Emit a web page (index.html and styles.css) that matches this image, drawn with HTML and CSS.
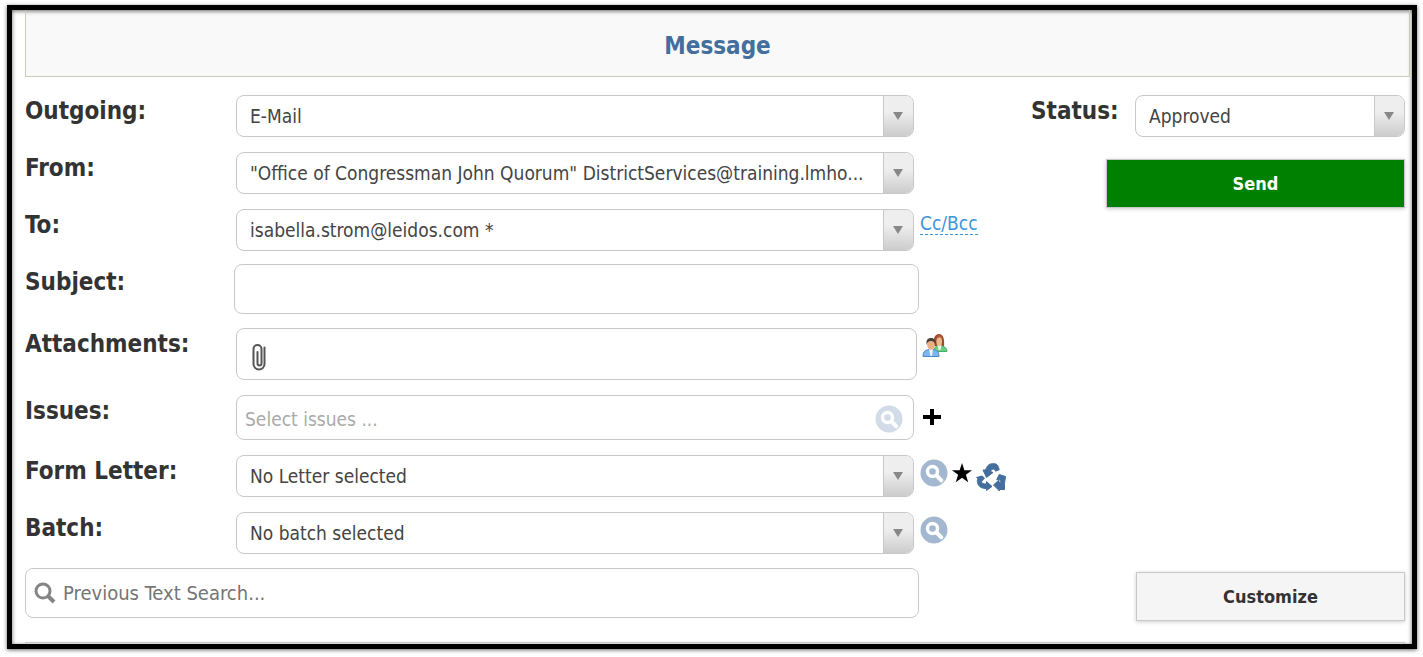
FILE: index.html
```
<!DOCTYPE html>
<html lang="en">
<head>
    <meta charset="UTF-8">
    <meta name="viewport" content="width=device-width, initial-scale=1.0">
    <title>Message</title>
    <link rel="stylesheet" href="styles.css">
</head>
<body>
    <!-- Shared icon shapes -->
    <svg class="sprite" aria-hidden="true">
        <symbol id="icon-find" viewBox="0 0 28 28">
            <circle cx="14" cy="14" r="13.5" fill="currentColor"/>
            <circle cx="12.5" cy="12.5" r="5" fill="none" stroke="#fff" stroke-width="3.4"/>
            <path d="M16.5 16.5l4.8 4.8" stroke="#fff" stroke-width="4" stroke-linecap="round"/>
        </symbol>
    </svg>

    <div class="frame">
        <h1 class="title">Message</h1>

        <form class="message-form">
            <div class="fields">
                <div class="row">
                    <label for="outgoing">Outgoing:</label>
                    <div class="select-box">
                        <select id="outgoing"><option>E-Mail</option></select>
                    </div>
                </div>
                <div class="row">
                    <label for="from">From:</label>
                    <div class="select-box">
                        <select id="from"><option>"Office of Congressman John Quorum" DistrictServices@training.lmho...</option></select>
                    </div>
                </div>
                <div class="row">
                    <label for="to">To:</label>
                    <div class="select-box">
                        <select id="to"><option>isabella.strom@leidos.com *</option></select>
                    </div>
                    <div class="side"><a href="#" class="cc-link">Cc/Bcc</a></div>
                </div>
                <div class="row row-subject">
                    <label for="subject">Subject:</label>
                    <input type="text" id="subject" class="subject">
                </div>
                <div class="row">
                    <label for="attach">Attachments:</label>
                    <div class="box attachments">
                        <button type="button" id="attach" class="icon-button" aria-label="Attach file">
                            <svg width="16" height="28" viewBox="0 0 16 28">
                                <path d="M13.500 4.500V21a5.500 5.500 0 0 1-11 0V6a4 4 0 0 1 8 0v14.500a2 2 0 0 1-4 0V9" fill="none" stroke="#555" stroke-width="2" stroke-linecap="round"/>
                            </svg>
                        </button>
                    </div>
                    <div class="side side-contacts">
                        <button type="button" class="icon-button" aria-label="Contacts">
                            <svg width="26" height="26" viewBox="0 0 26 26">
                                <path d="M11.500 13C11 6 12.500 1 17 1s5.500 5 5 13z" fill="#9c4a2c"/>
                                <path d="M12 18.500c0-4 2-6 5.500-6s7.500 2 7.500 6z" fill="#6bcf82" stroke="#4cad63"/>
                                <path d="M15.500 12h4l-1 5h-2z" fill="#f4efe6"/>
                                <ellipse cx="17.200" cy="8.500" rx="2.800" ry="4.500" fill="#f0b98a"/>
                                <path d="M14 7c1-3 5-4 7-1l-1-3-4-1z" fill="#b35b30"/>
                                <path d="M1 23.500c0-5 2-7 8-7s8 2 8 7z" fill="#7fb4ec" stroke="#4a86cc"/>
                                <path d="M7 16h4l-1 7H8.500z" fill="#eef4fb"/>
                                <ellipse cx="9" cy="11.500" rx="3.800" ry="5.200" fill="#e8b083"/>
                                <path d="M4.500 12c-.5-5 1-7 4.500-7s5 2 4.500 7c-1-3-2-4-4.500-4s-3.500 1-4.500 4z" fill="#4a3f3a"/>
                            </svg>
                        </button>
                    </div>
                </div>
                <div class="row">
                    <label for="issues">Issues:</label>
                    <div class="box issues">
                        <input type="text" id="issues" placeholder="Select issues ...">
                        <button type="button" class="icon-button find find-pale" aria-label="Find issues">
                            <svg width="28" height="28"><use href="#icon-find"/></svg>
                        </button>
                    </div>
                    <div class="side side-plus">
                        <button type="button" class="icon-button" aria-label="Add issue">
                            <svg width="18" height="18" viewBox="0 0 18 18"><path d="M0 9h18M9 1v16" stroke="#000" stroke-width="4"/></svg>
                        </button>
                    </div>
                </div>
                <div class="row">
                    <label for="letter">Form Letter:</label>
                    <div class="select-box">
                        <select id="letter"><option>No Letter selected</option></select>
                    </div>
                    <div class="side">
                        <button type="button" class="icon-button find" aria-label="Find letter">
                            <svg width="28" height="28"><use href="#icon-find"/></svg>
                        </button>
                        <button type="button" class="icon-button" aria-label="Favorite letters">
                            <svg width="20" height="20" viewBox="0 0 20 20"><path d="M10 0l2.400 7.200H20l-6.100 4.600 2.300 7.500L10 14.700l-6.200 4.600 2.300-7.500L0 7.200h7.600z"/></svg>
                        </button>
                        <button type="button" class="icon-button" aria-label="Reset letter">
                            <svg width="30" height="28" viewBox="0 0 30 28" fill="#436e9e" stroke="#436e9e" stroke-linejoin="round">
                                <path d="M7 7h2.500C11 3 13 .8 16 .8h3.200c2 .4 3.300 2.500 4 6l-3.700 1.400C18.500 5.500 16.500 5 14.500 8.500l2.500 1-6.500 5z"/>
                                <path d="M29.500 13.500l-1 7v6h-5V28l-6-6 5.500-5v2.500h1.500c.5-1 0-2.300-.8-3.200l-3 .5 2.500-5.300z"/>
                                <path d="M8.500 15l-3 3.500c0 2 2 2.600 5 2.400v-2.300l5.500 4.800-5.500 4.100v-2C6 25.500 2.500 24 1.500 19.500c-.5-1.500 0-3 .5-4l-1.500-1 5.500-1.500z"/>
                            </svg>
                        </button>
                    </div>
                </div>
                <div class="row">
                    <label for="batch">Batch:</label>
                    <div class="select-box">
                        <select id="batch"><option>No batch selected</option></select>
                    </div>
                    <div class="side">
                        <button type="button" class="icon-button find" aria-label="Find batch">
                            <svg width="28" height="28"><use href="#icon-find"/></svg>
                        </button>
                    </div>
                </div>
                <div class="box search">
                    <svg width="22" height="22" viewBox="0 0 22 22" fill="none" stroke="#858585">
                        <circle cx="9" cy="9" r="7" stroke-width="3"/>
                        <path d="M14 14l6 6" stroke-width="4"/>
                    </svg>
                    <input type="text" placeholder="Previous Text Search..." aria-label="Previous Text Search">
                </div>
            </div>

            <div class="actions">
                <div class="status">
                    <label for="status">Status:</label>
                    <div class="select-box">
                        <select id="status"><option>Approved</option></select>
                    </div>
                </div>
                <button type="submit" class="button send">Send</button>
                <button type="button" class="button customize">Customize</button>
            </div>
        </form>

        <div class="editor"></div>
    </div>
</body>
</html>
```
FILE: styles.css
```
* {
    box-sizing: border-box;
}

body {
    font-family: Tahoma, "DejaVu Sans Condensed", sans-serif;
    font-size: 19px;
    margin: 0;
    padding: 5px 6px 8px 7px;
    color: #444;
    background-color: white;
}

.sprite {
    display: none;
}

.frame {
    border: 5px solid black;
    padding: 0 2px 0 13px;
    box-shadow: 0 1px 4px rgba(0, 0, 0, 0.6), inset 0 1px 4px rgba(0, 0, 0, 0.6);
}

.title {
    margin: 0;
    padding: 20px 0 14px;
    border: 1px solid #c9cbb5;
    border-top: none;
    background-color: rgba(0, 0, 0, 0.025);
    color: #436e9e;
    font-size: 24px;
    line-height: 32px;
    text-align: center;
}

.message-form {
    display: flex;
    padding: 18px 5px 24px 0;
}

.fields {
    flex: 1;
}

.row {
    display: grid;
    grid-template-columns: 209px 1fr 112px;
    align-items: start;
    margin-bottom: 15px;
}

label {
    color: #333;
    font-size: 24px;
    font-weight: bold;
    line-height: 32px;
}

.select-box,
.box,
.subject {
    border: 1px solid #c8c8c8;
    border-radius: 8px;
    background-color: white;
}

.select-box {
    position: relative;
    margin: 0 5px 0 2px;
    overflow: hidden;
}

.select-box::after {
    content: "";
    position: absolute;
    top: 0;
    right: 0;
    bottom: 0;
    width: 29px;
    border-left: 1px solid #c8c8c8;
    background: linear-gradient(#eee 40%, #ccc);
    pointer-events: none;
}

.select-box::before {
    content: "";
    position: absolute;
    z-index: 1;
    top: 16px;
    right: 10px;
    border: 5px solid transparent;
    border-top: 8px solid #888;
    border-bottom: none;
    pointer-events: none;
}

select,
input {
    width: 100%;
    border: none;
    outline: none;
    background: none;
    color: #444;
    font-family: inherit;
    font-size: 19px;
}

select {
    display: block;
    height: 40px;
    padding: 0 30px 0 13px;
    appearance: none;
}

.row-subject {
    margin-top: -2px;
    margin-bottom: 14px;
}

.row-subject label {
    padding-top: 2px;
}

.subject {
    height: 50px;
    padding: 0 14px;
}

.attachments {
    height: 52px;
    margin: 0 2px;
    padding: 14px;
}

.issues {
    display: flex;
    align-items: center;
    height: 45px;
    margin: 0 5px 0 2px;
    padding: 2px 10px 0 8px;
}

.issues input,
.search input {
    flex: 1;
    padding: 0;
}

.issues input::placeholder {
    color: #aaa;
}

.search {
    display: flex;
    align-items: center;
    gap: 7px;
    height: 50px;
    margin: -1px 112px 0 0;
    padding: 0 8px;
}

.search input {
    font-size: 20px;
}

.search input::placeholder {
    color: #757575;
}

.side {
    display: flex;
    align-items: start;
    gap: 4px;
    padding: 4px 0 0 1px;
}

.side-contacts {
    padding: 1px 0 0 3px;
}

.side-plus {
    padding: 9px 0 0 4px;
}

.icon-button {
    display: block;
    padding: 0;
    border: none;
    background: none;
    cursor: pointer;
}

.icon-button svg {
    display: block;
}

.side .icon-button {
    margin-top: 4px;
}

.side .find {
    margin-top: 0;
}

.find {
    color: #a3b8d0;
}

.find-pale {
    color: #d1dce8;
}

.cc-link {
    color: #3c96dc;
    font-size: 19px;
    line-height: 21px;
    border-bottom: 1px dashed #3c96dc;
    text-decoration: none;
}

.actions {
    display: flex;
    flex-direction: column;
    align-items: flex-end;
    width: 374px;
    margin-bottom: -3px;
}

.status {
    display: flex;
    align-items: flex-start;
    justify-content: space-between;
    width: 100%;
}

.status .select-box {
    width: 270px;
    margin: 0;
}

.button {
    height: 49px;
    border: 1px solid #c8c8c8;
    box-shadow: 0 1px 4px rgba(0, 0, 0, 0.2);
    font-family: inherit;
    font-size: 18px;
    font-weight: bold;
    cursor: pointer;
}

.send {
    width: 299px;
    margin-top: 22px;
    background-color: #008000;
    color: white;
}

.customize {
    width: 269px;
    margin-top: auto;
    background-color: #f5f5f5;
    color: #333;
}

.editor {
    height: 2px;
    margin-right: 5px;
    border: 1px solid #c8c8c8;
    border-bottom: none;
}
```
